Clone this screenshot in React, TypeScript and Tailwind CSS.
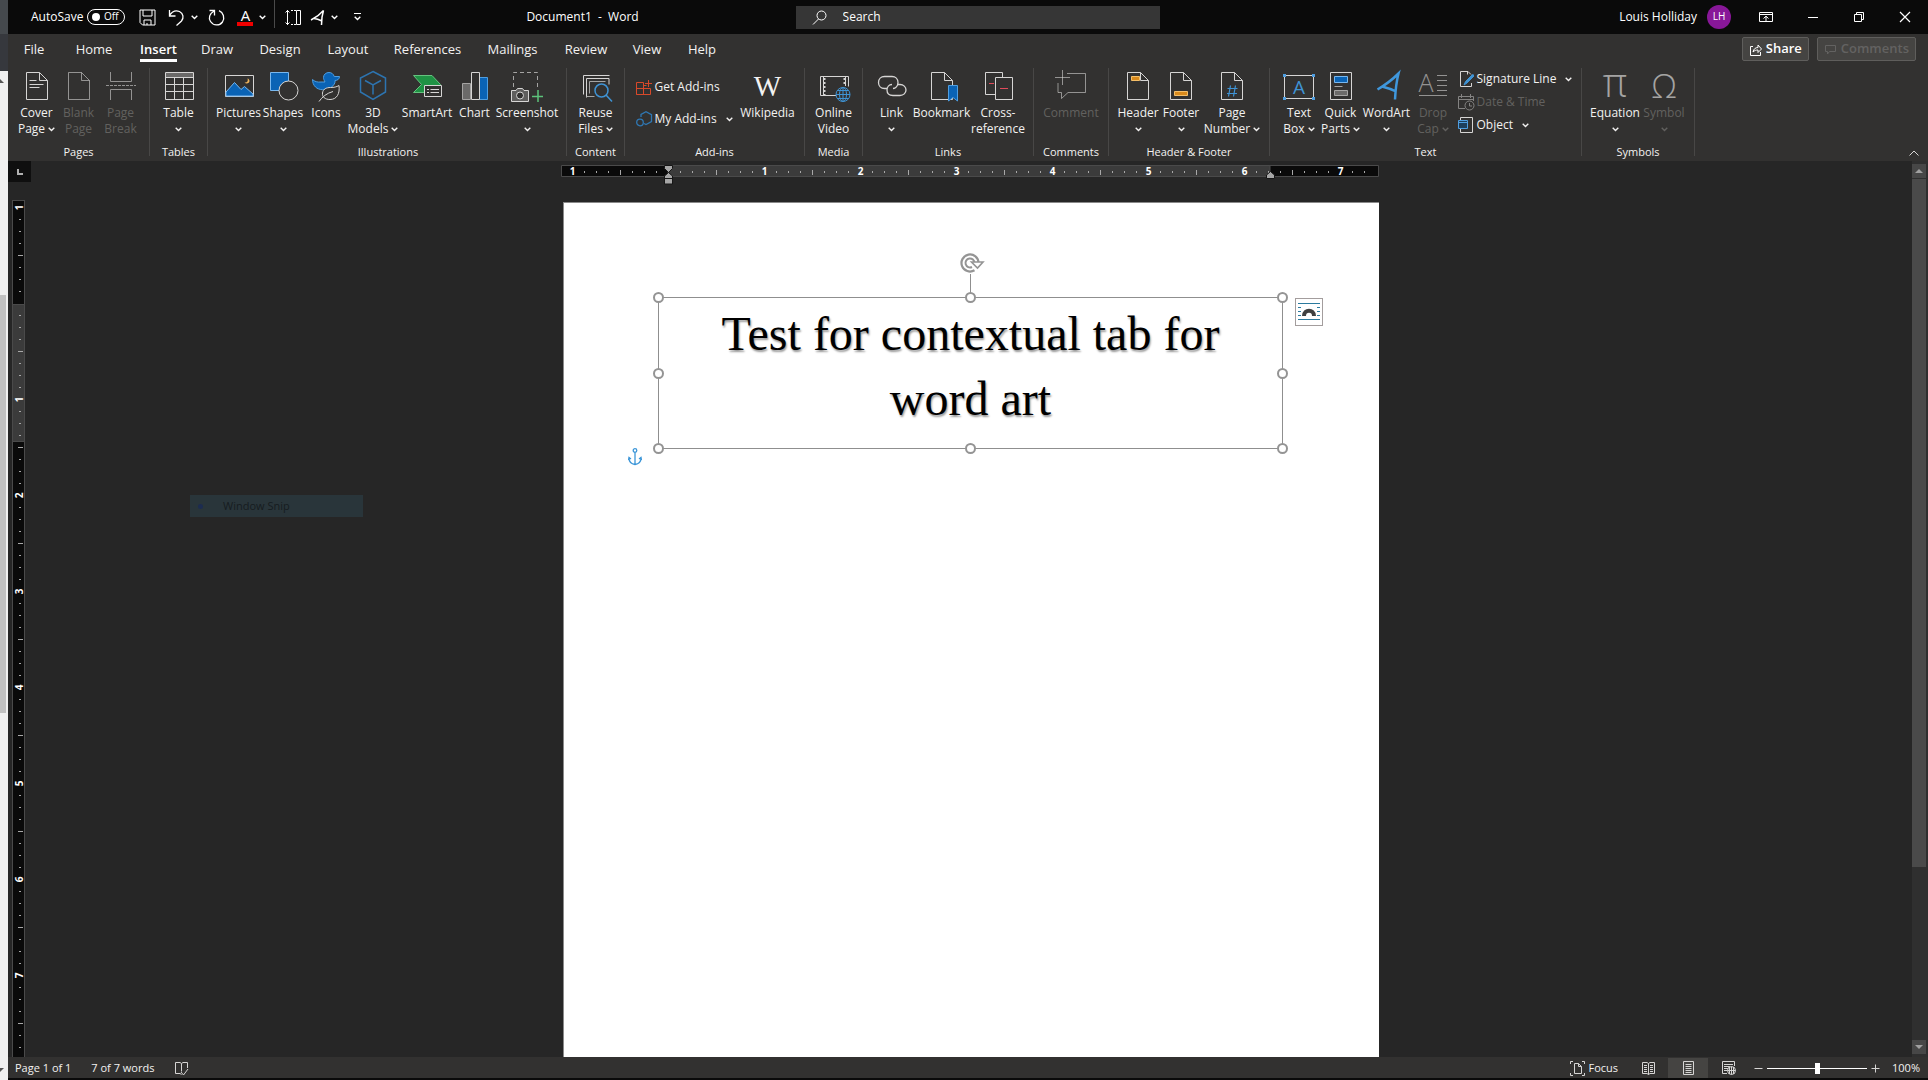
import { useState } from 'react';
import type { ReactNode } from 'react';
import clsx from 'clsx';

interface IconProps {
  size?: number;
  className?: string;
  children: ReactNode;
}

const Icon = ({ size = 32, className, children }: IconProps) => (
  <svg
    width={size}
    height={size}
    viewBox={`0 0 ${size} ${size}`}
    fill="none"
    stroke="#d6d5d4"
    className={clsx('shrink-0 overflow-visible', className)}
    aria-hidden="true"
  >
    {children}
  </svg>
);

const Chevron = ({ className }: { className?: string }) => (
  <svg
    width="7"
    height="5"
    viewBox="0 0 7 5"
    fill="none"
    stroke="currentColor"
    strokeWidth="1.4"
    className={clsx('shrink-0', className)}
    aria-hidden="true"
  >
    <path d="M0.7 0.8 3.5 3.5 6.3 0.8" />
  </svg>
);

/* Sheet with a folded corner, shared by most of the page icons */
const Sheet = () => <path d="M5.5 2.5h13l8 8v19h-21zM18.5 2.5v8h8" />;

const CoverPageIcon = () => (
  <Icon>
    <Sheet />
    <path d="M8.5 10.5h7M8.5 14.5h14M8.5 17.5h10" />
  </Icon>
);

const BlankPageIcon = () => (
  <Icon className="opacity-60">
    <Sheet />
  </Icon>
);

const PageBreakIcon = () => (
  <Icon className="opacity-60">
    <path d="M5.5 2v9.5h21V2M5.5 30V19.5h21V30" />
    <path d="M1 15.5h30" strokeDasharray="3 1" />
  </Icon>
);

const TableIcon = () => (
  <Icon>
    <path d="M2.5 2.5h28v27h-28z" />
    <path d="M3 3h27v4H3z" fill="#6b6a69" stroke="none" />
    <path d="M2.5 7.5h28M2.5 14.5h28M2.5 21.5h28M11.5 7.5v22M20.5 7.5v22" />
  </Icon>
);

const PicturesIcon = () => (
  <Icon>
    <path d="M2.5 5.5h28v21h-28z" />
    <path d="M3 22 11.5 12.5 18 19.5 21.5 16.5 30 24v2H3z" fill="#0a63b5" stroke="#78b7ee" />
    <path d="M24.5 8.5c1 2.5-.5 4.5-3 4 2 2 5 .5 5-1.5 0-1.200-.8-2.200-2-2.500z" fill="#f0b45b" stroke="none" />
  </Icon>
);

const ShapesIcon = () => (
  <Icon>
    <path d="M3.5 2.5h18v18h-18z" fill="#0a63b5" stroke="#78b7ee" />
    <circle cx="21.5" cy="20.5" r="9.5" fill="#323130" />
  </Icon>
);

const IconsIcon = () => (
  <Icon>
    <path
      d="M2.5 9.5c2 2 5 3 8.5 2.5h4c-1-2-1.5-3-1.5-4.500 0-3 2.500-5 5.500-5 2.500 0 4.500 1.500 5.200 4h5.300c0 2.500-2 4-4.500 4 .5 2-1 5-4 7-5 3-12 3-15.500-.5-2-2-3-4.500-3-7.500z"
      fill="#0a63b5"
      stroke="#4f9ee0"
    />
    <path
      d="M29 15.500c1 8-2 14-9 14-5 0-8-2.500-7.500-6.500.5-4 4-5.500 8-5.500 3.500 0 6-.5 8.500-2z"
      fill="#323130"
    />
    <path d="M9 31.500c3-4.500 8-8.500 14-10" />
  </Icon>
);

const ModelsIcon = () => (
  <Icon>
    <g stroke="#2d74b0" strokeWidth="1.5">
      <path d="M16 1.500 28.500 8v14L16 29.500 3.500 22V8z" />
      <path d="M8 10.500 16 15l8-4.500M16 15v9.500" />
    </g>
  </Icon>
);

const SmartArtIcon = () => (
  <Icon>
    <path d="M2.500 5.500H21l8.500 9-8 8h-19l8-8z" fill="#1f9244" stroke="#65c27e" />
    <path d="M13.500 15.500h17v11h-17z" fill="#323130" />
    <path d="M16 19.500h2M19.500 19.500h8.500M16 22.500h2M19.500 22.500h8.500" />
  </Icon>
);

const ChartIcon = () => (
  <Icon>
    <path d="M3.500 13.500h8v16h-8z" fill="#6b6a69" stroke="#a5a4a3" />
    <path d="M20.500 7.500h8v22h-8z" fill="#0a63b5" stroke="#4f9ee0" />
    <path d="M12.500 2.500h8v27h-8z" fill="#323130" />
  </Icon>
);

const ScreenshotIcon = () => (
  <Icon>
    <path d="M2.500 17V2.500h24V20" strokeDasharray="4 3" stroke="#a5a4a3" />
    <path d="M.5 20.500H5l1.500-2h5l1.500 2h4.500v11H.5z" fill="#5f5e5d" />
    <circle cx="9" cy="25.500" r="3.500" fill="#323130" />
    <path d="M27 20v12M21 26.500h11" stroke="#5cc27a" strokeWidth="1.5" />
  </Icon>
);

const ReuseIcon = () => (
  <Icon>
    <path d="M3.500 24.500v-19h26" />
    <path d="M6.500 27.500v-19H29v6" />
    <path d="M6.500 26.500h8M9.500 23.500v-12h16" stroke="#a5a4a3" />
    <circle cx="21.500" cy="20.500" r="6.500" fill="#323130" stroke="#3f93d4" strokeWidth="1.5" />
    <path d="m26 25 6 6.500" stroke="#3f93d4" strokeWidth="1.5" />
  </Icon>
);

const GetAddinsIcon = () => (
  <Icon size={16}>
    <path d="M.5 3.500h7v12h-7zM.5 9.500h14v6h-14M7.500 6.500h3M12.500 1v7M9 4.500h7" stroke="#d8492a" />
  </Icon>
);

const MyAddinsIcon = () => (
  <Icon size={16}>
    <g stroke="#2f78b4" strokeWidth="1.3">
      <path d="M5 6V3.500L10 .7l5.500 3v7L10 13.500l-2-1" />
      <circle cx="4" cy="11.500" r="3.300" />
    </g>
  </Icon>
);

const OnlineVideoIcon = () => (
  <Icon>
    <path d="M18 25.500H2.500v-19h28v10M5.500 7v18M27.500 7v9" />
    <path d="M6.500 8v18M26.500 8v8" strokeDasharray="2 2" strokeWidth="2" />
    <circle cx="25" cy="24.500" r="7" fill="#323130" stroke="#3f93d4" />
    <path d="M18 24.500h14M25 17.500v14M19.500 20.500h11M19.500 28.500h11" stroke="#3f93d4" />
    <ellipse cx="25" cy="24.500" rx="3.500" ry="7" stroke="#3f93d4" />
  </Icon>
);

const LinkIcon = () => (
  <Icon>
    <g strokeWidth="1.3">
      <path d="M11 18.500H8.500c-3.500 0-6-2.500-6-6s2.500-6 6-6H16c3.500 0 6 2.500 6 6s-2.500 6-5 6" />
      <path d="M21 14.500h3c3.500 0 6 2.500 6 5.500s-2.500 5.500-6 5.500h-7c-4 0-6-2.500-6-5.500s2-5.500 5-5.500" />
    </g>
  </Icon>
);

const BookmarkIcon = () => (
  <Icon>
    <Sheet />
    <path d="M22.500 15.500h9V31l-4.500-3.500-4.500 3.500z" fill="#0a63b5" stroke="#4f9ee0" />
  </Icon>
);

const CrossRefIcon = () => (
  <Icon>
    <path d="M13 24.500H3.500v-22h17v5M13.500 7.500h17v22h-17z" />
    <path d="M7 13.500h5M18 18.500h8" stroke="#e04b5a" />
  </Icon>
);

const CommentIcon = () => (
  <Icon className="opacity-60">
    <path d="M12 3.500h18.500v19H13l-6.500 6v-6h-3.500V13M7.500 0v15M0 7.500h15" />
  </Icon>
);

const HeaderIcon = () => (
  <Icon>
    <Sheet />
    <path d="M9.500 6.500h8v4h-8z" fill="#d98a1c" stroke="#f5bf69" />
  </Icon>
);

const FooterIcon = () => (
  <Icon>
    <Sheet />
    <path d="M9.500 21.500h13v4h-13z" fill="#d98a1c" stroke="#f5bf69" />
  </Icon>
);

const PageNumberIcon = () => (
  <Icon>
    <Sheet />
    <path d="m14.500 15.500-2 11M19.500 15.500l-2 11M11.500 18.500h10M11 23.500h10" stroke="#3f93d4" strokeWidth="1.2" />
  </Icon>
);

const TextBoxIcon = () => (
  <Icon>
    <path d="M1.500 5.500h29v23h-29z" />
    <path d="M0 4h3v3H0zM29 4h3v3h-3zM0 27h3v3H0zM29 27h3v3h-3z" fill="#4f9ee0" stroke="none" />
    <text x="16" y="24" textAnchor="middle" fontSize="19" fill="#3f93d4" stroke="none">
      A
    </text>
  </Icon>
);

const QuickPartsIcon = () => (
  <Icon>
    <path d="M5.500 2.500h21v27h-21z" />
    <path d="M9.500 6.500h13v6h-13z" fill="#0a63b5" stroke="#78b7ee" />
    <path d="M9.500 16.500h8M9.500 20.500h13v5h-13z" fill="#6b6a69" stroke="#a5a4a3" />
  </Icon>
);

const WordArtIcon = () => (
  <Icon>
    <path
      d="M6.500 19.500C15 14.500 22 9 27.500 3.500c-2 8-3 16-3.500 26M11 16.500c4 1 9 2.500 14 5"
      stroke="#3f97dc"
      strokeWidth="2.5"
    />
  </Icon>
);

const DropCapIcon = () => (
  <Icon className="opacity-60">
    <text x="9" y="22" textAnchor="middle" fontSize="25" fontWeight="300" fill="#d6d5d4" stroke="none">
      A
    </text>
    <path d="M20 5.500h10M20 10.500h10M20 15.500h10M20 20.500h10M2 25.500h28" />
  </Icon>
);

const EquationIcon = () => (
  <Icon className="opacity-70">
    <text x="16" y="27" textAnchor="middle" fontSize="40" fontWeight="300" fill="#d6d5d4" stroke="none">
      π
    </text>
  </Icon>
);

const SymbolIcon = () => (
  <Icon className="opacity-70">
    <text x="16" y="28" textAnchor="middle" fontSize="33" fontWeight="300" fill="#d6d5d4" stroke="none">
      Ω
    </text>
  </Icon>
);

const SignatureIcon = () => (
  <Icon size={16}>
    <path d="M10 .5H2.500v15h11V12M10 .5l3 3M9.500.5v3" />
    <path d="M15.500 3.500 8 11.500M6 14l1.500-3.500 7-7 1.500 1.500-7 7z" fill="#3f93d4" stroke="#3f93d4" />
  </Icon>
);

const DateIcon = () => (
  <Icon size={16} className="opacity-50">
    <path d="M7 14.500H.5v-12h15V7M.5 5.500h15M3.500 0v4M12.500 0v4" />
    <circle cx="11.500" cy="11.500" r="4.500" />
    <path d="M11.500 9v3h2.500" />
  </Icon>
);

const ObjectIcon = () => (
  <Icon size={16}>
    <path d="M2.500 3V.5h12v15h-12V12" />
    <path d="M.5 3.500h9v8h-9zM.5 5.500h9" fill="#1d3f5c" stroke="#4f9ee0" />
  </Icon>
);

interface RibbonButton {
  label: string[];
  icon: ReactNode;
  width: string;
  menu?: boolean;
  disabled?: boolean;
}

const LargeButton = ({ label, icon, width, menu, disabled }: RibbonButton) => (
  <button
    type="button"
    disabled={disabled}
    className={clsx(
      'flex flex-col items-center pt-0.5 leading-4 whitespace-nowrap enabled:hover:bg-[#444342]',
      width,
      disabled ? 'text-[#62615f]' : 'text-[#f3f2f1]'
    )}
  >
    <span className="flex h-8 items-center justify-center">{icon}</span>
    <span className="mt-[3px]">{label[0]}</span>
    {(label[1] || menu) && (
      <span className="flex h-4 items-center gap-[3px]">
        {label[1]}
        {menu && <Chevron />}
      </span>
    )}
  </button>
);

interface SmallButtonProps {
  label: string;
  icon: ReactNode;
  menu?: boolean;
  disabled?: boolean;
}

const SmallButton = ({ label, icon, menu, disabled }: SmallButtonProps) => (
  <button
    type="button"
    disabled={disabled}
    className={clsx(
      'flex h-[22px] items-center gap-[3px] pl-1 whitespace-nowrap',
      disabled ? 'text-[#62615f]' : 'text-[#f3f2f1] hover:bg-[#444342]'
    )}
  >
    {icon}
    {label}
    {menu && <Chevron className="ml-1.5" />}
  </button>
);

const RibbonGroup = ({ name, width, children }: { name: string; width: string; children: ReactNode }) => (
  <>
    <section className={clsx('flex shrink-0 flex-col items-center', width)} aria-label={name}>
      <div className="flex h-[76px] justify-center">{children}</div>
      <div className="text-[11px] leading-4 whitespace-nowrap">{name}</div>
    </section>
    <div className="h-[88px] w-px shrink-0 bg-[#484746]" />
  </>
);

const pages: RibbonButton[] = [
  { label: ['Cover', 'Page'], icon: <CoverPageIcon />, width: 'w-[42px]', menu: true },
  { label: ['Blank', 'Page'], icon: <BlankPageIcon />, width: 'w-[42px]', disabled: true },
  { label: ['Page', 'Break'], icon: <PageBreakIcon />, width: 'w-[42px]', disabled: true },
];

const illustrations: RibbonButton[] = [
  { label: ['Pictures'], icon: <PicturesIcon />, width: 'w-[45px]', menu: true },
  { label: ['Shapes'], icon: <ShapesIcon />, width: 'w-[44px]', menu: true },
  { label: ['Icons'], icon: <IconsIcon />, width: 'w-[42px]' },
  { label: ['3D', 'Models'], icon: <ModelsIcon />, width: 'w-[52px]', menu: true },
  { label: ['SmartArt'], icon: <SmartArtIcon />, width: 'w-[56px]' },
  { label: ['Chart'], icon: <ChartIcon />, width: 'w-[39px]' },
  { label: ['Screenshot'], icon: <ScreenshotIcon />, width: 'w-[66px]', menu: true },
];

const links: RibbonButton[] = [
  { label: ['Link'], icon: <LinkIcon />, width: 'w-[44px]', menu: true },
  { label: ['Bookmark'], icon: <BookmarkIcon />, width: 'w-[56px]' },
  { label: ['Cross-', 'reference'], icon: <CrossRefIcon />, width: 'w-[57px]' },
];

const headerFooter: RibbonButton[] = [
  { label: ['Header'], icon: <HeaderIcon />, width: 'w-[44px]', menu: true },
  { label: ['Footer'], icon: <FooterIcon />, width: 'w-[42px]', menu: true },
  { label: ['Page', 'Number'], icon: <PageNumberIcon />, width: 'w-[60px]', menu: true },
];

const textItems: RibbonButton[] = [
  { label: ['Text', 'Box'], icon: <TextBoxIcon />, width: 'w-[43px]', menu: true },
  { label: ['Quick', 'Parts'], icon: <QuickPartsIcon />, width: 'w-[40px]', menu: true },
  { label: ['WordArt'], icon: <WordArtIcon />, width: 'w-[52px]', menu: true },
  { label: ['Drop', 'Cap'], icon: <DropCapIcon />, width: 'w-[41px]', menu: true, disabled: true },
];

const symbols: RibbonButton[] = [
  { label: ['Equation'], icon: <EquationIcon />, width: 'w-[52px]', menu: true },
  { label: ['Symbol'], icon: <SymbolIcon />, width: 'w-[46px]', menu: true, disabled: true },
];

const renderButtons = (items: RibbonButton[]) => items.map((item) => <LargeButton key={item.label.join(' ')} {...item} />);

const tabs = [
  { name: 'File', width: 'w-[52px]' },
  { name: 'Home', width: 'w-[68px]' },
  { name: 'Insert', width: 'w-[61px]' },
  { name: 'Draw', width: 'w-[56px]' },
  { name: 'Design', width: 'w-[70px]' },
  { name: 'Layout', width: 'w-[66px]' },
  { name: 'References', width: 'w-[93px]' },
  { name: 'Mailings', width: 'w-[77px]' },
  { name: 'Review', width: 'w-[70px]' },
  { name: 'View', width: 'w-[52px]' },
  { name: 'Help', width: 'w-[58px]' },
];

const TitleBar = () => {
  const [autoSave, setAutoSave] = useState(false);

  return (
    <header className="flex h-[34px] shrink-0 items-center bg-[#0a0a0a] text-xs text-white">
      <div className="flex h-full flex-1 items-center pl-5">
        <label className="ml-[3px] flex items-center gap-1">
          AutoSave
          <input
            type="checkbox"
            className="peer sr-only"
            checked={autoSave}
            onChange={() => setAutoSave(!autoSave)}
          />
          <span className="flex h-4 w-[38px] items-center justify-between rounded-full border border-white pr-1.5 pl-1 text-[10px]">
            <span className="h-2 w-2 rounded-full bg-white" />
            {autoSave ? 'On' : 'Off'}
          </span>
        </label>
        <button type="button" aria-label="Save" className="ml-3.5">
          <Icon size={17}>
            <path d="M1 1h15v15H3.500L1 13.500zM4 1v6h9V1M5 16v-5h7v5M8 16v-2" stroke="#fff" />
          </Icon>
        </button>
        <button type="button" aria-label="Undo" className="ml-3">
          <Icon size={17}>
            <path
              d="M1.500 1v6h6M1.500 6.500C4 2.500 8 1 11.500 2.500c4 2 4.500 6.500 2 9.500L8.500 16.500"
              stroke="#fff"
              strokeWidth="1.3"
            />
          </Icon>
        </button>
        <button type="button" aria-label="Undo history" className="ml-1.5">
          <Chevron />
        </button>
        <button type="button" aria-label="Repeat" className="ml-2.5">
          <Icon size={17}>
            <path
              d="M1.500 1.500h5v5M6.200 2C1.500 4.500.2 9 2.500 12.500c3 4.500 9 4.500 12 .5 2.500-4 1-9.500-3.500-11.300"
              stroke="#fff"
              strokeWidth="1.3"
            />
          </Icon>
        </button>
        <button type="button" aria-label="Font color" className="ml-3 flex w-4 flex-col items-center">
          <span className="text-[15px] leading-[13px]">A</span>
          <span className="h-1 w-4 bg-[#f00000]" />
        </button>
        <button type="button" aria-label="Font color menu" className="ml-1.5">
          <Chevron />
        </button>
        <div className="mr-2.5 ml-2 h-7 w-px self-start bg-[#4a4a4a]" />
        <button type="button" aria-label="Text direction">
          <Icon size={17}>
            <path d="M2.500 1v15M.5 3.500 2.500 1.500l2 2M.5 13.500l2 2 2-2M11.500 1.500h4v14h-4z" stroke="#fff" />
            <path d="M6 1.500h5M6 15.500h5" stroke="#fff" strokeDasharray="2 1" />
          </Icon>
        </button>
        <button type="button" aria-label="WordArt" className="ml-2">
          <Icon size={17}>
            <path
              d="M1 11C6 8.500 10.500 5 13.500 1.500 12 6 11.500 11 11.500 16M4 9.500c3 .2 5 1 8 2.500"
              stroke="#fff"
              strokeWidth="1.5"
            />
          </Icon>
        </button>
        <button type="button" aria-label="WordArt menu" className="ml-1">
          <Chevron />
        </button>
        <button type="button" aria-label="Customize toolbar" className="ml-4 flex flex-col items-center gap-[2px]">
          <span className="h-px w-[7px] bg-white" />
          <Chevron />
        </button>
        <div className="flex-1 pl-2 text-center whitespace-pre">{'Document1  -  Word'}</div>
      </div>

      <label className="flex h-[23px] w-[19%] items-center bg-[#363636] pl-4">
        <Icon size={15}>
          <circle cx="9.500" cy="5.500" r="4.500" stroke="#fff" />
          <path d="M6.500 9 1 14.500" stroke="#fff" />
        </Icon>
        <input
          type="search"
          placeholder="Search"
          aria-label="Search"
          className="ml-4 min-w-0 flex-1 bg-transparent outline-none placeholder:text-white"
        />
      </label>

      <div className="flex h-full flex-1 items-center justify-end">
        <span>Louis Holliday</span>
        <span className="ml-2.5 flex h-6 w-6 items-center justify-center rounded-full bg-[#881798] text-[10px]">LH</span>
        <button type="button" aria-label="Ribbon display options" className="ml-7">
          <Icon size={14}>
            <path d="M.5 2.500h13v9H.5zM.5 4.500h13M7 11V6.500M4.500 8.500 7 6.200l2.500 2.300" stroke="#fff" />
          </Icon>
        </button>
        <button type="button" aria-label="Minimize" className="ml-[34px]">
          <Icon size={12}>
            <path d="M1 6.500h10" stroke="#fff" />
          </Icon>
        </button>
        <button type="button" aria-label="Restore" className="ml-[34px]">
          <Icon size={12}>
            <path d="M1.500 3.500h7v7h-7zM3.500 3V1.500h7v7H9" stroke="#fff" />
          </Icon>
        </button>
        <button type="button" aria-label="Close" className="mr-[17px] ml-[34px]">
          <Icon size={12}>
            <path d="m1 1 10 10M11 1 1 11" stroke="#fff" strokeWidth="1.2" />
          </Icon>
        </button>
      </div>
    </header>
  );
};

const TabBar = () => {
  const [active, setActive] = useState('Insert');

  return (
    <nav className="flex h-[34px] shrink-0 items-center text-[13px]">
      {tabs.map((tab) => (
        <button
          key={tab.name}
          type="button"
          onClick={() => setActive(tab.name)}
          className={clsx('flex h-full justify-center pt-[5px] leading-5', tab.width)}
        >
          <span
            className={clsx(
              'h-[23px] border-b-3',
              active === tab.name ? 'border-white font-semibold text-white' : 'border-transparent'
            )}
          >
            {tab.name}
          </span>
        </button>
      ))}
      <div className="mb-1 ml-auto flex gap-2 pr-3 font-semibold">
        <button
          type="button"
          className="flex h-6 items-center gap-1 rounded-xs border border-[#5f5e5c] bg-[#454442] px-1.5 text-white"
        >
          <Icon size={13}>
            <path d="M4 3.500H1.500v9h10V9M4 9c.5-3 2.500-4.500 5-4.500V2l3.500 4L9 9.500V7C7 7 5.500 7.500 4 9z" stroke="#fff" />
          </Icon>
          Share
        </button>
        <button
          type="button"
          disabled
          className="flex h-6 items-center gap-1 rounded-xs border border-[#5f5e5c] bg-[#454442] px-1.5 text-[#636261]"
        >
          <Icon size={13}>
            <path d="M1.500 2.500h10v6h-6l-2 2.500v-2.500h-2z" stroke="#636261" />
          </Icon>
          Comments
        </button>
      </div>
    </nav>
  );
};

const Ribbon = () => (
  <div className="flex h-[93px] shrink-0 text-xs">
    <RibbonGroup name="Pages" width="w-[141px]">
      {renderButtons(pages)}
    </RibbonGroup>
    <RibbonGroup name="Tables" width="w-[57px]">
      <LargeButton label={['Table']} icon={<TableIcon />} width="w-[42px]" menu />
    </RibbonGroup>
    <RibbonGroup name="Illustrations" width="w-[358px] pl-0.5">
      {renderButtons(illustrations)}
    </RibbonGroup>
    <RibbonGroup name="Content" width="w-[57px]">
      <LargeButton label={['Reuse', 'Files']} icon={<ReuseIcon />} width="w-[42px]" menu />
    </RibbonGroup>
    <RibbonGroup name="Add-ins" width="w-[179px]">
      <div className="flex w-[106px] flex-col gap-2.5 pt-2">
        <SmallButton label="Get Add-ins" icon={<GetAddinsIcon />} />
        <SmallButton label="My Add-ins" icon={<MyAddinsIcon />} menu />
      </div>
      <LargeButton
        label={['Wikipedia']}
        icon={<span className="font-['Liberation_Serif',serif] text-[29px] leading-8">W</span>}
        width="w-[60px]"
      />
    </RibbonGroup>
    <RibbonGroup name="Media" width="w-[57px]">
      <LargeButton label={['Online', 'Video']} icon={<OnlineVideoIcon />} width="w-[42px]" />
    </RibbonGroup>
    <RibbonGroup name="Links" width="w-[170px]">
      {renderButtons(links)}
    </RibbonGroup>
    <RibbonGroup name="Comments" width="w-[74px]">
      <LargeButton label={['Comment']} icon={<CommentIcon />} width="w-[60px]" disabled />
    </RibbonGroup>
    <RibbonGroup name="Header & Footer" width="w-[160px]">
      {renderButtons(headerFooter)}
    </RibbonGroup>
    <RibbonGroup name="Text" width="w-[311px]">
      {renderButtons(textItems)}
      <div className="flex w-[120px] flex-col items-start gap-px">
        <SmallButton label="Signature Line" icon={<SignatureIcon />} menu />
        <SmallButton label="Date & Time" icon={<DateIcon />} disabled />
        <SmallButton label="Object" icon={<ObjectIcon />} menu />
      </div>
    </RibbonGroup>
    <RibbonGroup name="Symbols" width="w-[112px]">
      {renderButtons(symbols)}
    </RibbonGroup>
    <button type="button" aria-label="Collapse the ribbon" className="mr-2 mb-0.5 ml-auto self-end">
      <Icon size={12}>
        <path d="M1.500 8.500 6 4l4.500 4.500" />
      </Icon>
    </button>
  </div>
);

const STEP = 12;

interface TicksProps {
  origin: number;
  from: number;
  to: number;
  vertical?: boolean;
}

/* Eighth-inch marks counted from the margin, with a number on every inch */
const Ticks = ({ origin, from, to, vertical }: TicksProps) => {
  const marks = [];
  for (let i = from; i <= to; i++) {
    if (i === 0) continue;
    const pos = origin + i * STEP;
    if (i % 8 === 0) {
      marks.push(
        <text
          key={i}
          x={vertical ? 0 : pos}
          y={vertical ? 0 : 10}
          transform={vertical ? `translate(11 ${pos}) rotate(-90)` : undefined}
          textAnchor="middle"
          fontSize="10"
          fontWeight="700"
          fill="#fff"
          stroke="none"
        >
          {Math.abs(i / 8)}
        </text>
      );
    } else {
      const half = i % 4 === 0;
      const start = half ? 5 : 6;
      const end = half ? 10 : 8;
      marks.push(
        <path key={i} d={vertical ? `M${start + 1} ${pos}H${end + 1}` : `M${pos} ${start}V${end}`} stroke="#a8a8a8" />
      );
    }
  }
  return <>{marks}</>;
};

const HorizontalRuler = () => (
  <svg width="818" height="20" viewBox="0 0 818 20" className="mt-1 shrink-0" aria-hidden="true">
    <path d="M.5.5h817v11H.5z" fill="#0a0a0a" stroke="#4a4a4a" />
    <path d="M107 .5h602v11H107z" fill="#3b3b3b" stroke="#4a4a4a" />
    <Ticks origin={107.5} from={-8} to={58} />
    <path d="M103.500.5h8v3l-4 4-4-4z" fill="#a6a6a6" stroke="#161616" />
    <path d="m107.500 7.500 4 3.500v8h-8v-8z" fill="#a6a6a6" stroke="#161616" />
    <path d="M103.500 13.500h8" stroke="#161616" />
    <path d="m709.500 6.500 4 3.500v3.500h-8V10z" fill="#a6a6a6" stroke="#161616" />
  </svg>
);

const VerticalRuler = () => (
  <svg width="13" className="mt-[18px] ml-1 min-h-0 flex-1" fill="none" aria-hidden="true">
    <rect width="13" height="100%" fill="#4a4a4a" />
    <rect x="1" y="1" width="11" height="100%" fill="#0a0a0a" />
    <path d="M.5 104.500h12v137H.5z" fill="#3b3b3b" stroke="#4a4a4a" />
    <Ticks origin={103.5} from={-8} to={63} vertical />
  </svg>
);

const handles = [
  '-top-[6px] -left-[6px]',
  '-top-[6px] left-1/2 -ml-[6px]',
  '-top-[6px] -right-[6px]',
  'top-1/2 -mt-[5px] -left-[6px]',
  'top-1/2 -mt-[5px] -right-[6px]',
  '-bottom-[6px] -left-[6px]',
  '-bottom-[6px] left-1/2 -ml-[6px]',
  '-bottom-[6px] -right-[6px]',
];

const WordArtBox = () => (
  <div className="relative h-[152px] border border-[#8f8f8f] px-12 pt-[3px]">
    <p className="text-center font-['Liberation_Serif',serif] text-[48px] leading-[65px] text-black [text-shadow:1px_2px_2px_#00000066]">
      Test for contextual tab for word art
    </p>
    <div className="absolute bottom-full left-1/2 -ml-px h-6 w-px bg-[#8f8f8f]" />
    <svg
      width="26"
      height="22"
      viewBox="0 0 26 22"
      fill="none"
      className="absolute -top-[46px] left-1/2 -ml-3"
      aria-hidden="true"
    >
      <path d="M19.500 11a8.500 8.500 0 1 0-4 7.200" stroke="#949494" strokeWidth="2.2" />
      <path d="M15.500 11a4.500 4.500 0 1 0-2.500 4" stroke="#949494" strokeWidth="2" />
      <path d="M12.500 10h11.500l-5.500 6z" fill="#fff" stroke="#949494" strokeWidth="1.6" />
    </svg>
    {handles.map((place) => (
      <span key={place} className={clsx('absolute h-[11px] w-[11px] rounded-full border-2 border-[#949494] bg-white', place)} />
    ))}
    <button
      type="button"
      aria-label="Layout options"
      className="absolute top-0 left-full ml-[13px] h-7 w-7 border border-[#a39d9d] bg-white"
    >
      <svg width="26" height="26" viewBox="0 0 26 26" fill="none" aria-hidden="true">
        <path
          d="M2 4.500h22M2 8.500h3M21 8.500h3M2 12.500h3M21 12.500h3M2 16.500h3M21 16.500h3M2 20.500h22"
          stroke="#2b7a9e"
        />
        <path d="M8 17c0-7 10-7 10 0" stroke="#404040" strokeWidth="4" />
      </svg>
    </button>
    <svg
      width="14"
      height="18"
      viewBox="0 0 14 18"
      fill="none"
      stroke="#3c96d8"
      strokeWidth="1.3"
      className="absolute top-full right-full mr-[17px]"
      aria-hidden="true"
    >
      <circle cx="7" cy="2.500" r="1.800" />
      <path d="M7 4.500v12M1 10c0 4 2.500 6 6 6.500 3.500-.5 6-2.500 6-6.500M.5 12 1 9.500l2 1.500M13.500 12 13 9.500 11 11" />
    </svg>
  </div>
);

const Workspace = () => (
  <main className="relative flex min-h-0 flex-1 overflow-hidden bg-[#262626]">
    <div className="flex w-5 shrink-0 flex-col">
      <div className="flex h-[21px] w-[23px] shrink-0 items-center justify-center bg-[#0f0f0f]">
        <span className="h-[6px] w-[6px] border-b-2 border-l-2 border-[#b0b0b0]" />
      </div>
      <VerticalRuler />
    </div>

    <div className="flex min-w-0 flex-1 justify-center">
      <div className="flex w-[818px] shrink-0 flex-col items-end">
        <HorizontalRuler />
        <article className="mt-[17px] w-[816px] flex-1 border-t border-l border-[#8a8a8a] bg-white pt-[94px] pr-24 pl-[94px]">
          <WordArtBox />
        </article>
      </div>
    </div>

    <div className="flex w-4 shrink-0 flex-col items-center bg-[#2f2f2f] py-[3px] pr-[2px]">
      <button type="button" aria-label="Scroll up" className="flex h-[14px] w-[14px] items-center justify-center bg-[#474747]">
        <span className="border-x-4 border-b-4 border-x-transparent border-b-[#a0a0a0]" />
      </button>
      <div className="mt-px w-[14px] flex-[690] bg-[#4a4a4a]" />
      <div className="flex-[174]" />
      <button type="button" aria-label="Scroll down" className="flex h-[14px] w-[14px] items-center justify-center bg-[#474747]">
        <span className="border-x-4 border-t-4 border-x-transparent border-t-[#a0a0a0]" />
      </button>
    </div>

    {/* Menu entry fading out over the canvas */}
    <div className="absolute top-[334px] left-[182px] flex h-[22px] w-[173px] items-center bg-[#29353a] text-[11px] text-[#161c20]">
      <span className="ml-2 h-[5px] w-[5px] rounded-full bg-[#1c2c50]" />
      <span className="ml-5">Window Snip</span>
    </div>
  </main>
);

const StatusBar = () => {
  const [zoom, setZoom] = useState(100);

  return (
    <footer className="flex h-[21px] shrink-0 items-center bg-[#323130] pt-px text-[11px] text-[#f3f2f1]">
      <span className="ml-[7px]">Page 1 of 1</span>
      <span className="ml-5">7 of 7 words</span>
      <button type="button" aria-label="Proofing" className="ml-5">
        <Icon size={15}>
          <path d="M7.500 2.500 6 1.500H1.500v11H6l1.500 1M7.500 2.500 9 1.500h4.500V7M7.500 2.500v8M7 11l2.500 3 4.500-6" />
        </Icon>
      </button>

      <button type="button" className="ml-auto flex items-center gap-[3px]">
        <Icon size={15}>
          <path d="M3 .5H.5V3M12 .5h2.500V3M3 14.500H.5V12M12 14.500h2.500V12M4.500 2.500h4l3 3v7h-7zM8.500 2.500v3h3" />
        </Icon>
        Focus
      </button>
      <button type="button" aria-label="Read mode" className="ml-[23px]">
        <Icon size={15}>
          <path d="M7.500 2.500 6 1.500H1.500v11H6l1.500 1 1.500-1h4.500v-11H9zM7.500 2.500v11M3 4.500h3M3 6.500h3M3 8.500h3M3 10.500h3M9 4.500h3M9 6.500h3M9 8.500h3M9 10.500h3" />
        </Icon>
      </button>
      <button
        type="button"
        aria-label="Print layout"
        className="ml-3 flex h-full w-10 items-center justify-center bg-[#454442]"
      >
        <Icon size={15}>
          <path d="M2.500.5h10v13h-10zM4.500 3.500h6M4.500 5.500h6M4.500 7.500h6M4.500 9.500h6M4.500 11.500h6" />
        </Icon>
      </button>
      <button type="button" aria-label="Web layout" className="ml-[13px]">
        <Icon size={15}>
          <path d="M6 12.500H1.500v-12h12V5M3 3.500h9M3 5.500h6M3 7.500h4M3 9.500h3" />
          <circle cx="10.500" cy="9.500" r="4" fill="#323130" />
          <path d="M6.500 9.500h8M10.500 5.500v8M8.500 6v7M12.500 6v7" />
        </Icon>
      </button>
      <button type="button" aria-label="Zoom out" className="ml-[18px]" onClick={() => setZoom(Math.max(0, zoom - 10))}>
        <Icon size={9}>
          <path d="M.5 4.500h8" />
        </Icon>
      </button>
      <input
        type="range"
        aria-label="Zoom"
        min={0}
        max={200}
        value={zoom}
        onChange={(e) => setZoom(Number(e.target.value))}
        className="mx-1 h-3 w-[100px] appearance-none bg-transparent bg-[linear-gradient(#fff,#fff)] bg-[length:100%_1px] bg-center bg-no-repeat [&::-webkit-slider-thumb]:h-[11px] [&::-webkit-slider-thumb]:w-[5px] [&::-webkit-slider-thumb]:appearance-none [&::-webkit-slider-thumb]:bg-white"
      />
      <button type="button" aria-label="Zoom in" onClick={() => setZoom(Math.min(200, zoom + 10))}>
        <Icon size={9}>
          <path d="M.5 4.500h8M4.500.5v8" />
        </Icon>
      </button>
      <span className="mr-2 ml-3">{zoom}%</span>
    </footer>
  );
};

export default function App() {
  return (
    <div className="flex h-screen overflow-hidden bg-[#0a0a0a] font-['Open_Sans','Noto_Sans',sans-serif] text-[#f3f2f1]">
      {/* Sliver of the window behind */}
      <div className="flex w-2 shrink-0 flex-col bg-[#f0f0f0]">
        <div className="h-[34px] bg-[#45494d]" />
        <div className="h-[37px] bg-[#36383d]" />
        <div className="mt-2 h-0 w-0 border-r-4 border-b-4 border-r-transparent border-b-[#555]" />
        <div className="mt-[212px] h-[418px] w-1.5 bg-[#c1c1c1]" />
        <div className="mt-auto mb-2 h-0 w-0 border-t-4 border-r-4 border-t-[#555] border-r-transparent" />
      </div>
      <div className="mb-0.5 flex min-w-0 flex-1 flex-col bg-[#323130]">
        <TitleBar />
        <TabBar />
        <Ribbon />
        <Workspace />
        <StatusBar />
      </div>
    </div>
  );
}
